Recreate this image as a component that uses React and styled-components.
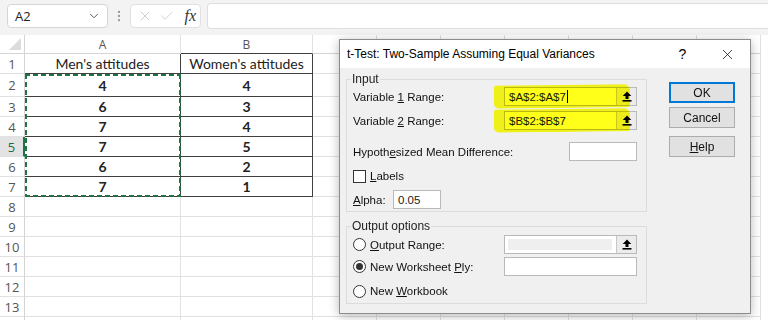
import styled, { createGlobalStyle, css } from 'styled-components';
import { X, Check, ChevronDown, EllipsisVertical } from 'lucide-react';

const GlobalStyle = createGlobalStyle`
  html, body {
    margin: 0;
    padding: 0;
    background: #fff;
  }
  body {
    width: 768px;
    height: 320px;
    overflow: hidden;
  }
`;

const Page = styled.div`
  position: relative;
  width: 768px;
  height: 320px;
  overflow: hidden;
  background: #fff;
  font-family: 'Liberation Sans', Arial, sans-serif;
`;

/* ---------- formula bar ---------- */

const FormulaBar = styled.div`
  display: flex;
  align-items: center;
  height: 35px;
  padding: 0 0 4px 7px;
  box-sizing: border-box;
  background: #f3f3f3;
`;

const NameBox = styled.div`
  display: flex;
  align-items: center;
  justify-content: space-between;
  width: 101px;
  height: 24px;
  box-sizing: border-box;
  padding: 0 6px 0 7px;
  background: #fff;
  border: 1px solid #d6d6d6;
  border-radius: 4px;
  font-family: 'Open Sans', sans-serif;
  font-size: 13px;
  color: #222;
`;

const Dots = styled.div`
  width: 22px;
  display: flex;
  justify-content: center;
  color: #9a9a9a;
`;

const FuncBox = styled.div`
  display: flex;
  align-items: center;
  width: 71px;
  height: 24px;
  box-sizing: border-box;
  padding: 0 4px 0 6px;
  gap: 6px;
  background: #fff;
  border: 1px solid #e0e0e0;
  border-radius: 4px;
  color: #c4c4c4;
`;

const Fx = styled.span`
  margin-left: auto;
  font-family: 'Liberation Serif', serif;
  font-style: italic;
  font-size: 16px;
  color: #333;
`;

const FormulaInput = styled.div`
  flex: 1;
  height: 24px;
  margin-left: 6px;
  background: #fff;
  border: 1px solid #dedede;
  border-right: none;
  border-radius: 4px 0 0 4px;
`;

/* ---------- sheet ---------- */

const Sheet = styled.div`
  display: grid;
  grid-template-columns: 25px 156px 132px repeat(8, 64px);
  grid-template-rows: 19px 20px 23px repeat(12, 20px);
`;

const Corner = styled.div`
  grid-row: 1;
  grid-column: 1;
  position: relative;
  border-right: 1px solid #d4d4d4;
  border-bottom: 1px solid #d4d4d4;
  &::after {
    content: '';
    position: absolute;
    right: 3px;
    bottom: 3px;
    width: 12px;
    height: 12px;
    background: #dcdcdc;
    clip-path: polygon(100% 0, 100% 100%, 0 100%);
  }
`;

const ColHead = styled.div`
  grid-row: 1;
  grid-column: ${(p) => p.$col};
  display: flex;
  align-items: center;
  justify-content: center;
  border-right: 1px solid #e1e1e1;
  border-bottom: 1px solid ${(p) => (p.$dark ? '#3f3f3f' : '#d4d4d4')};
  font-family: 'Open Sans', sans-serif;
  font-size: 12px;
  color: #555;
`;

const RowHead = styled.div`
  grid-row: ${(p) => p.$row};
  grid-column: 1;
  display: flex;
  align-items: center;
  justify-content: center;
  border-bottom: 1px solid #e1e1e1;
  border-right: 1px solid #d4d4d4;
  font-family: 'Open Sans', sans-serif;
  font-size: 13px;
  color: #555;
  ${(p) =>
    p.$active &&
    css`
      background: #e3e3e3;
      border-right: 2px solid #217346;
      color: #1f6b43;
    `}
`;

const Cell = styled.div`
  grid-row: ${(p) => p.$row};
  grid-column: ${(p) => p.$col};
  display: flex;
  align-items: center;
  justify-content: center;
  border-right: 1px solid ${(p) => (p.$dark ? '#3f3f3f' : '#e1e1e1')};
  border-bottom: 1px solid ${(p) => (p.$dark ? '#3f3f3f' : '#e1e1e1')};
  font-family: Lato, 'Open Sans', sans-serif;
  font-size: 14px;
  font-weight: ${(p) => (p.$bold ? 700 : 400)};
  color: #222;
`;

const Ants = styled.div`
  grid-row: 3 / 9;
  grid-column: 2;
  z-index: 1;
  pointer-events: none;
  background:
    linear-gradient(90deg, #217346 5px, transparent 5px) top left / 8px 2px repeat-x,
    linear-gradient(90deg, #217346 5px, transparent 5px) bottom left / 8px 2px repeat-x,
    linear-gradient(180deg, #217346 5px, transparent 5px) top left / 2px 8px repeat-y,
    linear-gradient(180deg, #217346 5px, transparent 5px) top right / 2px 8px repeat-y;
`;

/* ---------- dialog ---------- */

const Dialog = styled.div`
  position: absolute;
  left: 339px;
  top: 39px;
  width: 412px;
  height: 275px;
  box-sizing: border-box;
  border: 1px solid #8c8c8c;
  background: #f0f0f0;
  box-shadow: 0 2px 10px rgba(0, 0, 0, 0.28);
  font-family: 'Liberation Sans', Arial, sans-serif;
  font-size: 11.5px;
  color: #111;
  z-index: 5;
`;

const TitleBar = styled.div`
  display: flex;
  align-items: center;
  height: 28px;
  padding-left: 7px;
  background: #fff;
  font-size: 12px;
  color: #000;
`;

const TitleText = styled.div`
  flex: 1;
`;

const TitleBtn = styled.div`
  width: 45px;
  height: 28px;
  display: flex;
  align-items: center;
  justify-content: center;
  font-size: 14px;
`;

const Body = styled.div`
  display: flex;
  padding: 4px 15px 0 6px;
`;

const LeftCol = styled.div`
  width: 301px;
  display: flex;
  flex-direction: column;
`;

const Group = styled.fieldset`
  margin: ${(p) => p.$top || 0}px 0 0 0;
  padding: 1px 9px ${(p) => p.$bottom || 2}px 6px;
  border: 1px solid #dcdcdc;
  min-width: 0;
`;

const Legend = styled.legend`
  padding: 0 1px;
  margin-left: -2px;
  font-size: 12px;
  line-height: 14px;
  color: #222;
`;

const Row = styled.div`
  display: flex;
  align-items: center;
  height: ${(p) => p.$h || 19}px;
  margin-top: ${(p) => p.$gap || 0}px;
  gap: 4px;
`;

const Label = styled.span`
  width: ${(p) => (p.$w ? `${p.$w}px` : 'auto')};
  white-space: nowrap;
`;

const Spacer = styled.div`
  flex: 1;
`;

const TextBox = styled.div`
  position: relative;
  display: flex;
  align-items: center;
  width: ${(p) => p.$w}px;
  height: 19px;
  box-sizing: border-box;
  padding-left: 4px;
  background: #fff;
  border: 1px solid #b9b9b9;
  font-size: 11.5px;
  color: #1a1a1a;
  ${(p) =>
    p.$highlight &&
    css`
      &::before {
        content: '';
        position: absolute;
        left: -11px;
        right: 6px;
        top: -3px;
        bottom: -3px;
        background: #ffff1a;
        border-radius: 2px 6px 3px 5px;
        transform: skewY(-0.6deg);
        mix-blend-mode: multiply;
        z-index: 2;
      }
    `}
`;

const Caret = styled.span`
  display: inline-block;
  width: 1px;
  height: 13px;
  margin-left: 1px;
  background: #000;
`;

const Disabled = styled.div`
  flex: 1;
  align-self: stretch;
  margin: 3px 4px 3px -1px;
  background: #efefef;
`;

const PickBtn = styled.div`
  display: flex;
  align-items: center;
  justify-content: center;
  width: 20px;
  align-self: stretch;
  margin-left: auto;
  box-sizing: border-box;
  background: #ececec;
  border-left: 1px solid #c8c8c8;
`;

const CheckBox = styled.span`
  width: 13px;
  height: 13px;
  box-sizing: border-box;
  border: 1px solid #333;
  background: #fff;
`;

const Radio = styled.span`
  display: flex;
  align-items: center;
  justify-content: center;
  width: 13px;
  height: 13px;
  box-sizing: border-box;
  border: 1px solid #333;
  border-radius: 50%;
  background: #fff;
  &::after {
    content: '';
    width: 7px;
    height: 7px;
    border-radius: 50%;
    background: ${(p) => (p.$on ? '#333' : 'transparent')};
  }
`;

const RightCol = styled.div`
  margin-left: 22px;
  padding-top: 10px;
  display: flex;
  flex-direction: column;
`;

const Button = styled.div`
  display: flex;
  align-items: center;
  justify-content: center;
  width: 66px;
  height: 21px;
  margin-top: ${(p) => p.$gap || 0}px;
  box-sizing: border-box;
  background: #e1e1e1;
  border: ${(p) => (p.$default ? '2px solid #0078d7' : '1px solid #adadad')};
  font-size: 12px;
  color: #111;
`;

const UpArrow = () => (
  <svg width="10" height="11" viewBox="0 0 10 11">
    <path d="M5 0.5 L9.3 5 H6.5 V8 H3.5 V5 H0.7 Z" fill="#000" />
    <rect x="0.5" y="9" width="9" height="1.6" fill="#000" />
  </svg>
);

const data = [
  ["Men's attitudes", "Women's attitudes"],
  [4, 4],
  [6, 3],
  [7, 4],
  [7, 5],
  [6, 2],
  [7, 1],
];

const renderSheet = () => {
  const items = [<Corner key="corner" />];
  const letters = ['A', 'B', '', '', '', '', '', '', ''];
  letters.forEach((l, i) => {
    items.push(
      <ColHead key={`h${i}`} $col={i + 2} $dark={i === 1}>
        {l}
      </ColHead>
    );
  });
  for (let r = 1; r <= 14; r++) {
    const gr = r + 1;
    items.push(
      <RowHead key={`r${r}`} $row={gr} $active={r === 5}>
        {r <= 13 ? r : null}
      </RowHead>
    );
    for (let c = 0; c < 9; c++) {
      const inTable = r <= 7 && c < 2;
      items.push(
        <Cell key={`c${r}-${c}`} $row={gr} $col={c + 2} $dark={inTable} $bold={inTable && r > 1}>
          {inTable ? data[r - 1][c] : null}
        </Cell>
      );
    }
  }
  items.push(<Ants key="ants" />);
  return items;
};

const App = () => {
  return (
    <Page>
      <GlobalStyle />
      <FormulaBar>
        <NameBox>
          A2
          <ChevronDown size={14} strokeWidth={1.5} color="#444" />
        </NameBox>
        <Dots>
          <EllipsisVertical size={14} strokeWidth={2} />
        </Dots>
        <FuncBox>
          <X size={16} strokeWidth={1.2} />
          <Check size={16} strokeWidth={1.2} />
          <Fx>fx</Fx>
        </FuncBox>
        <FormulaInput />
      </FormulaBar>

      <Sheet>{renderSheet()}</Sheet>

      <Dialog>
        <TitleBar>
          <TitleText>t-Test: Two-Sample Assuming Equal Variances</TitleText>
          <TitleBtn>?</TitleBtn>
          <TitleBtn>
            <X size={17} strokeWidth={1.1} color="#111" />
          </TitleBtn>
        </TitleBar>
        <Body>
          <LeftCol>
            <Group>
              <Legend>Input</Legend>
              <Row>
                <Label>
                  Variable <u>1</u> Range:
                </Label>
                <Spacer />
                <TextBox $w={133} $highlight>
                  $A$2:$A$7
                  <Caret />
                  <PickBtn>
                    <UpArrow />
                  </PickBtn>
                </TextBox>
              </Row>
              <Row $gap={5}>
                <Label>
                  Variable <u>2</u> Range:
                </Label>
                <Spacer />
                <TextBox $w={133} $highlight>
                  $B$2:$B$7
                  <PickBtn>
                    <UpArrow />
                  </PickBtn>
                </TextBox>
              </Row>
              <Row $gap={12}>
                <Label>
                  Hypoth<u>e</u>sized Mean Difference:
                </Label>
                <Spacer />
                <TextBox $w={68} />
              </Row>
              <Row $gap={6} $h={18}>
                <CheckBox />
                <Label>
                  <u>L</u>abels
                </Label>
              </Row>
              <Row $gap={5}>
                <Label $w={36}>
                  <u>A</u>lpha:
                </Label>
                <TextBox $w={48}>0.05</TextBox>
              </Row>
            </Group>

            <Group $top={7} $bottom={3}>
              <Legend>Output options</Legend>
              <Row $gap={1}>
                <Radio />
                <Label>
                  <u>O</u>utput Range:
                </Label>
                <Spacer />
                <TextBox $w={133}>
                  <Disabled />
                  <PickBtn>
                    <UpArrow />
                  </PickBtn>
                </TextBox>
              </Row>
              <Row $gap={3}>
                <Radio $on />
                <Label>
                  New Worksheet <u>P</u>ly:
                </Label>
                <Spacer />
                <TextBox $w={133} />
              </Row>
              <Row $gap={6} $h={18}>
                <Radio />
                <Label>
                  New <u>W</u>orkbook
                </Label>
              </Row>
            </Group>
          </LeftCol>

          <RightCol>
            <Button $default>OK</Button>
            <Button $gap={4}>Cancel</Button>
            <Button $gap={8}>
              <span>
                <u>H</u>elp
              </span>
            </Button>
          </RightCol>
        </Body>
      </Dialog>
    </Page>
  );
};

export default App;
